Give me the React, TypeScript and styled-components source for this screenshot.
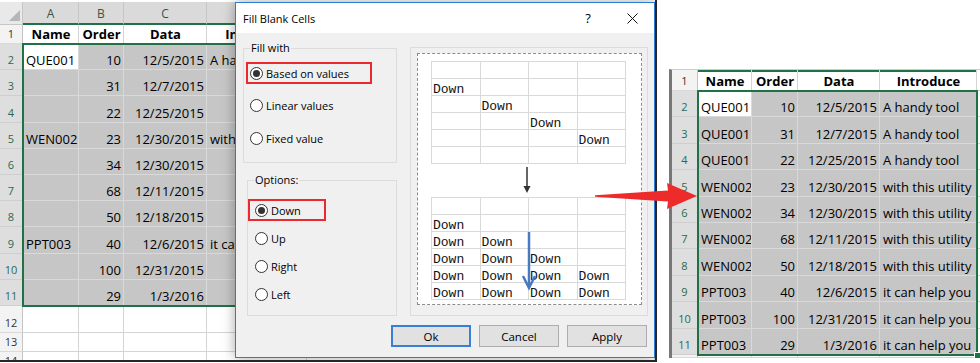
import React from 'react';
import styled, { createGlobalStyle } from 'styled-components';

type Align = 'left' | 'right' | 'center';

const GREEN = '#1f7146';
const SELECTED = '#c6c6c6';

const GlobalStyle = createGlobalStyle`
  html, body { margin: 0; padding: 0; background: #ffffff; }
  body { font-family: "Open Sans", "Liberation Sans", sans-serif; }
`;

const Canvas = styled.div`
  position: relative;
  display: flex;
  width: 980px;
  height: 363px;
  overflow: hidden;
  background: #ffffff;
`;

const LeftPanel = styled.div`
  position: relative;
  flex: none;
  width: 657px;
  height: 362px;
  box-sizing: border-box;
  border-right: 2px solid #262626;
  border-bottom: 2px solid #262626;
  overflow: hidden;
`;

const RightPanel = styled.div`
  flex: 1;
  margin-left: 12px;
  padding-top: 69px;
`;

const RightFrame = styled.div`
  border-left: 3px solid #777777;
  border-top: 1px solid #cccccc;
`;

// spreadsheet parts

const SheetBox = styled.div<{ $pad: number }>`
  display: flex;
  flex-direction: column;
  padding-top: ${p => p.$pad}px;
  font-family: "Open Sans", "Liberation Sans", sans-serif;
  font-size: 13px;
  color: #000;
`;

const Row = styled.div<{ $h: number }>`
  display: flex;
  flex: none;
  height: ${p => p.$h}px;
`;

const Block = styled.div`
  display: flex;
  flex: none;
`;

const HeadColumn = styled.div`
  display: flex;
  flex-direction: column;
  flex: none;
`;

const FillColumn = styled(HeadColumn)`
  flex: 1;
`;

const Corner = styled.div<{ $w: number }>`
  width: ${p => p.$w}px;
  flex: none;
  box-sizing: border-box;
  background: #e9e9e9;
  border-right: 1px solid #c6c6c6;
  border-bottom: 1px solid #c6c6c6;
`;

const ColHead = styled.div<{ $w?: number; $sel?: boolean }>`
  ${p => (p.$w ? `width: ${p.$w}px; flex: none;` : 'flex: 1;')}
  box-sizing: border-box;
  display: flex;
  align-items: center;
  justify-content: center;
  padding-top: 2px;
  background: ${p => (p.$sel ? '#dadada' : '#f2f2f2')};
  border-right: 1px solid #c6c6c6;
  border-bottom: ${p => (p.$sel ? `2px solid ${GREEN}` : '1px solid #c6c6c6')};
  color: #3d5247;
  font-size: 12px;
`;

const RowHead = styled.div<{ $w: number; $h?: number; $sel?: boolean }>`
  width: ${p => p.$w}px;
  ${p => (p.$h ? `height: ${p.$h}px;` : '')}
  flex: none;
  box-sizing: border-box;
  display: flex;
  align-items: flex-end;
  justify-content: center;
  padding-bottom: 2px;
  background: ${p => (p.$sel ? '#dedede' : '#f3f3f3')};
  border-right: 1px solid #c4c4c4;
  border-bottom: 1px solid ${p => (p.$sel ? '#cfcfcf' : '#dadada')};
  color: ${p => (p.$sel ? '#2b6a4c' : '#333333')};
  font-size: 11px;
  line-height: 14px;
  overflow: hidden;
`;

const Cell = styled.div<{ $w?: number; $align?: Align; $bold?: boolean; $fill?: string; $line?: string; $topLine?: boolean }>`
  ${p => (p.$w ? `width: ${p.$w}px; flex: none;` : 'flex: 1;')}
  box-sizing: border-box;
  display: flex;
  align-items: flex-end;
  justify-content: ${p => (p.$align === 'right' ? 'flex-end' : p.$align === 'center' ? 'center' : 'flex-start')};
  padding: 0 2px 1px 3px;
  background: ${p => p.$fill ?? '#ffffff'};
  border-right: 1px solid ${p => p.$line ?? '#d4d4d4'};
  border-bottom: 1px solid ${p => p.$line ?? '#d4d4d4'};
  box-shadow: ${p => (p.$topLine ? `inset 0 2px 0 ${GREEN}` : 'none')};
  font-weight: ${p => (p.$bold ? 700 : 400)};
  line-height: 15px;
  white-space: nowrap;
  overflow: hidden;
`;

const Filler = styled.div<{ $h: number }>`
  height: ${p => p.$h}px;
  box-sizing: border-box;
  border-bottom: 1px solid #d4d4d4;
  background: #ffffff;
`;

const Selection = styled.div`
  position: relative;
  z-index: 1;
  display: flex;
  flex-direction: column;
  flex: none;
  outline: 2px solid ${GREEN};
  outline-offset: -1px;
`;

const Handle = styled.span`
  position: absolute;
  right: -4px;
  bottom: -4px;
  width: 5px;
  height: 5px;
  background: ${GREEN};
  border: 1px solid #ffffff;
`;

const TITLES = ['Name', 'Order', 'Data', 'Introduce'];
const ALIGN: Align[] = ['left', 'right', 'right', 'left'];

const LEFT_ROWS = [
  ['QUE001', '10', '12/5/2015', 'A handy tool'],
  ['', '31', '12/7/2015', ''],
  ['', '22', '12/25/2015', ''],
  ['WEN002', '23', '12/30/2015', 'with this utility'],
  ['', '34', '12/30/2015', ''],
  ['', '68', '12/11/2015', ''],
  ['', '50', '12/18/2015', ''],
  ['PPT003', '40', '12/6/2015', 'it can help you'],
  ['', '100', '12/31/2015', ''],
  ['', '29', '1/3/2016', ''],
];

const RIGHT_ROWS = [
  ['QUE001', '10', '12/5/2015', 'A handy tool'],
  ['QUE001', '31', '12/7/2015', 'A handy tool'],
  ['QUE001', '22', '12/25/2015', 'A handy tool'],
  ['WEN002', '23', '12/30/2015', 'with this utility'],
  ['WEN002', '34', '12/30/2015', 'with this utility'],
  ['WEN002', '68', '12/11/2015', 'with this utility'],
  ['WEN002', '50', '12/18/2015', 'with this utility'],
  ['PPT003', '40', '12/6/2015', 'it can help you'],
  ['PPT003', '100', '12/31/2015', 'it can help you'],
  ['PPT003', '29', '1/3/2016', 'it can help you'],
];

interface SheetProps {
  pad: number;
  headW: number;
  cols: number[];
  letters?: string[];
  titleH: number;
  bodyH: number;
  rows: string[][];
  tail: { label: string; h: number }[];
  handle?: boolean;
}

const SpreadSheet = ({ pad, headW, cols, letters, titleH, bodyH, rows, tail, handle }: SheetProps) => (
  <SheetBox $pad={pad}>
    {letters && (
      <Row $h={23}>
        <Corner $w={headW}>
          <svg width="22" height="22" viewBox="0 0 22 22">
            <polygon points="9,19 20,19 20,8" fill="#b6b6b6" />
          </svg>
        </Corner>
        {letters.map((l, i) => (
          <ColHead key={l} $w={cols[i]} $sel>
            {l}
          </ColHead>
        ))}
        <ColHead />
      </Row>
    )}
    <Row $h={titleH}>
      <RowHead $w={headW}>1</RowHead>
      {TITLES.map((t, i) => (
        <Cell key={t} $w={cols[i]} $align="center" $bold $topLine={!letters}>
          {t}
        </Cell>
      ))}
      <Cell />
    </Row>
    <Block>
      <HeadColumn>
        {rows.map((_, i) => (
          <RowHead key={i} $w={headW} $h={bodyH} $sel>
            {i + 2}
          </RowHead>
        ))}
      </HeadColumn>
      <Selection>
        {rows.map((r, i) => (
          <Row key={i} $h={bodyH}>
            {r.map((v, j) => (
              <Cell
                key={j}
                $w={cols[j]}
                $align={ALIGN[j]}
                $fill={i === 0 && j === 0 ? '#ffffff' : SELECTED}
                $line="#d9d9d9"
              >
                {v}
              </Cell>
            ))}
          </Row>
        ))}
        {handle && <Handle />}
      </Selection>
      <FillColumn>
        {rows.map((_, i) => (
          <Filler key={i} $h={bodyH} />
        ))}
      </FillColumn>
    </Block>
    {tail.map(t => (
      <Row key={t.label} $h={t.h}>
        <RowHead $w={headW}>{t.label}</RowHead>
        {cols.map((w, j) => (
          <Cell key={j} $w={w} />
        ))}
        <Cell />
      </Row>
    ))}
  </SheetBox>
);

// dialog parts

const Dialog = styled.div`
  position: absolute;
  z-index: 5;
  left: 235px;
  top: 2px;
  width: 420px;
  height: 356px;
  box-sizing: border-box;
  display: flex;
  flex-direction: column;
  background: #f0f0f0;
  border: 1px solid #2b7cd3;
  box-shadow: 0 0 12px rgba(0, 0, 0, 0.35);
  font-family: "Open Sans", "Noto Sans", sans-serif;
  font-size: 11px;
  color: #000;
`;

const TitleBar = styled.div`
  flex: none;
  display: flex;
  align-items: center;
  height: 30px;
  padding-left: 7px;
  background: #ffffff;
`;

const Title = styled.div`
  flex: 1;
`;

const TitleButton = styled.div`
  width: 44px;
  height: 30px;
  display: flex;
  align-items: center;
  justify-content: center;
  font-size: 13px;
`;

const Body = styled.div`
  display: flex;
  flex-direction: column;
  padding: 14px 6px 0 7px;
`;

const Main = styled.div`
  display: flex;
  align-items: flex-start;
  gap: 13px;
`;

const OptionsColumn = styled.div`
  display: flex;
  flex-direction: column;
  width: 154px;
  padding-top: 1px;
`;

const GroupBox = styled.div<{ $w: number; $h: number; $ml?: number; $mt?: number; $pt: number; $gap: number }>`
  position: relative;
  box-sizing: border-box;
  width: ${p => p.$w}px;
  height: ${p => p.$h}px;
  margin: ${p => p.$mt ?? 0}px 0 0 ${p => p.$ml ?? 0}px;
  padding-top: ${p => p.$pt}px;
  display: flex;
  flex-direction: column;
  align-items: flex-start;
  gap: ${p => p.$gap}px;
  border: 1px solid #dcdcdc;
`;

const Legend = styled.span`
  position: absolute;
  top: -9px;
  left: 6px;
  padding: 0 1px;
  background: #f0f0f0;
  line-height: 15px;
`;

const RadioRow = styled.div<{ $hl?: boolean; $w?: number; $ml: number; $pl: number }>`
  display: flex;
  align-items: center;
  gap: 3px;
  box-sizing: border-box;
  height: 22px;
  ${p => (p.$w ? `width: ${p.$w}px;` : '')}
  margin-left: ${p => p.$ml}px;
  padding-left: ${p => p.$pl}px;
  border: 2px solid ${p => (p.$hl ? '#ec2a2e' : 'transparent')};
`;

const RadioDot = styled.span<{ $on?: boolean }>`
  flex: none;
  width: 13px;
  height: 13px;
  box-sizing: border-box;
  border-radius: 50%;
  border: 1px solid #333333;
  background: #ffffff;
  display: flex;
  align-items: center;
  justify-content: center;

  &::after {
    content: '';
    width: 7px;
    height: 7px;
    border-radius: 50%;
    background: ${p => (p.$on ? '#333333' : 'transparent')};
  }
`;

interface RadioProps {
  label: string;
  on?: boolean;
  hl?: boolean;
  w?: number;
  ml: number;
  pl: number;
}

const Radio = ({ label, on, hl, w, ml, pl }: RadioProps) => (
  <RadioRow $hl={hl} $w={w} $ml={ml} $pl={pl}>
    <RadioDot $on={on} />
    <span>{label}</span>
  </RadioRow>
);

const PreviewGroup = styled.div`
  box-sizing: border-box;
  width: 238px;
  height: 269px;
  padding: 5px 5px 10px 6px;
  border: 1px solid #dcdcdc;
`;

const PreviewCanvas = styled.div`
  box-sizing: border-box;
  height: 100%;
  padding: 7px 0 0 13px;
  background: #ffffff;
  border: 1px dashed #8c8c8c;
`;

const Step = styled.div`
  position: relative;
  width: 195px;
`;

const PreviewGrid = styled.div`
  display: grid;
  grid-template-columns: repeat(4, 1fr);
  width: 195px;
  box-sizing: border-box;
  border-top: 1px solid #d9d9d9;
  border-left: 1px solid #d9d9d9;
`;

const PreviewCell = styled.div`
  height: 17px;
  box-sizing: border-box;
  padding: 3px 0 0 1px;
  border-right: 1px solid #d9d9d9;
  border-bottom: 1px solid #d9d9d9;
  font-family: "Liberation Mono", "Courier New", monospace;
  font-size: 13px;
  line-height: 16px;
  white-space: nowrap;
  color: #111111;
`;

const ArrowBox = styled.svg`
  display: block;
`;

const FlowArrow = styled.svg`
  position: absolute;
  left: 0;
  top: 0;
  pointer-events: none;
`;

const Footer = styled.div`
  display: flex;
  justify-content: flex-end;
  gap: 8px;
  margin-top: 9px;
  padding-right: 1px;
`;

const Button = styled.button<{ $primary?: boolean }>`
  width: 80px;
  height: 22px;
  box-sizing: border-box;
  padding: 0;
  background: #e1e1e1;
  border: ${p => (p.$primary ? '2px solid #3a7fd5' : '1px solid #adadad')};
  font-family: inherit;
  font-size: 11.5px;
  color: #000;
`;

const Annotation = styled.svg`
  position: absolute;
  z-index: 10;
  left: 0;
  top: 0;
  pointer-events: none;
`;

const topText = (r: number, c: number) => (r >= 1 && r <= 4 && c === r - 1 ? 'Down' : '');
const bottomText = (r: number, c: number) => (c < Math.min(r, 4) ? 'Down' : '');

const Grid = ({ text }: { text: (r: number, c: number) => string }) => (
  <PreviewGrid>
    {Array.from({ length: 24 }, (_, i) => (
      <PreviewCell key={i}>{text(Math.floor(i / 4), i % 4)}</PreviewCell>
    ))}
  </PreviewGrid>
);

const FillDialog = () => (
  <Dialog>
    <TitleBar>
      <Title>Fill Blank Cells</Title>
      <TitleButton>?</TitleButton>
      <TitleButton>
        <svg width="11" height="11" viewBox="0 0 11 11">
          <path d="M0.5 0.5 L10.5 10.5 M10.5 0.5 L0.5 10.5" stroke="#111" strokeWidth="1" />
        </svg>
      </TitleButton>
    </TitleBar>
    <Body>
      <Main>
        <OptionsColumn>
          <GroupBox $w={154} $h={115} $pt={13} $gap={10.5}>
            <Legend>Fill with</Legend>
            <Radio label="Based on values" on hl w={126} ml={2} pl={2} />
            <Radio label="Linear values" ml={2} pl={2} />
            <Radio label="Fixed value" ml={2} pl={2} />
          </GroupBox>
          <GroupBox $w={150} $h={136} $ml={4} $mt={17} $pt={18} $gap={6}>
            <Legend>Options:</Legend>
            <Radio label="Down" on hl w={78} ml={0} pl={5} />
            <Radio label="Up" ml={0} pl={5} />
            <Radio label="Right" ml={0} pl={5} />
            <Radio label="Left" ml={0} pl={5} />
          </GroupBox>
        </OptionsColumn>
        <PreviewGroup>
          <PreviewCanvas>
            <Grid text={topText} />
            <ArrowBox width="195" height="33" viewBox="0 0 195 33">
              <line x1="96" y1="3" x2="96" y2="24" stroke="#333" strokeWidth="1.5" />
              <polygon points="92.5,22 99.5,22 96,29" fill="#333" />
            </ArrowBox>
            <Step>
              <Grid text={bottomText} />
              <FlowArrow width="195" height="103" viewBox="0 0 195 103">
                <line x1="98" y1="35" x2="98" y2="89" stroke="#4a79c4" strokeWidth="2.5" />
                <polyline points="92,79 98,91 104,79" fill="none" stroke="#4a79c4" strokeWidth="2.5" />
              </FlowArrow>
            </Step>
          </PreviewCanvas>
        </PreviewGroup>
      </Main>
      <Footer>
        <Button $primary>Ok</Button>
        <Button>Cancel</Button>
        <Button>Apply</Button>
      </Footer>
    </Body>
  </Dialog>
);

export default function App() {
  return (
    <>
      <GlobalStyle />
      <Canvas>
        <LeftPanel>
          <SpreadSheet
            pad={2}
            headW={23}
            cols={[56, 45, 83, 100]}
            letters={['A', 'B', 'C', 'D']}
            titleH={19}
            bodyH={26.2}
            rows={LEFT_ROWS}
            tail={[
              { label: '12', h: 27 },
              { label: '13', h: 19 },
              { label: '14', h: 19 },
            ]}
          />
          <FillDialog />
        </LeftPanel>
        <RightPanel>
          <RightFrame>
            <SpreadSheet
              pad={0}
              headW={26}
              cols={[54, 46, 82, 97]}
              titleH={21}
              bodyH={26.4}
              rows={RIGHT_ROWS}
              tail={[{ label: '', h: 3 }]}
              handle
            />
          </RightFrame>
        </RightPanel>
        <Annotation width="980" height="363" viewBox="0 0 980 363">
          <polygon
            points="595,195.3 668,190.5 667,183 697,196 667,209 668,201.5 595,196.7"
            fill="#ee2b2b"
          />
        </Annotation>
      </Canvas>
    </>
  );
}
